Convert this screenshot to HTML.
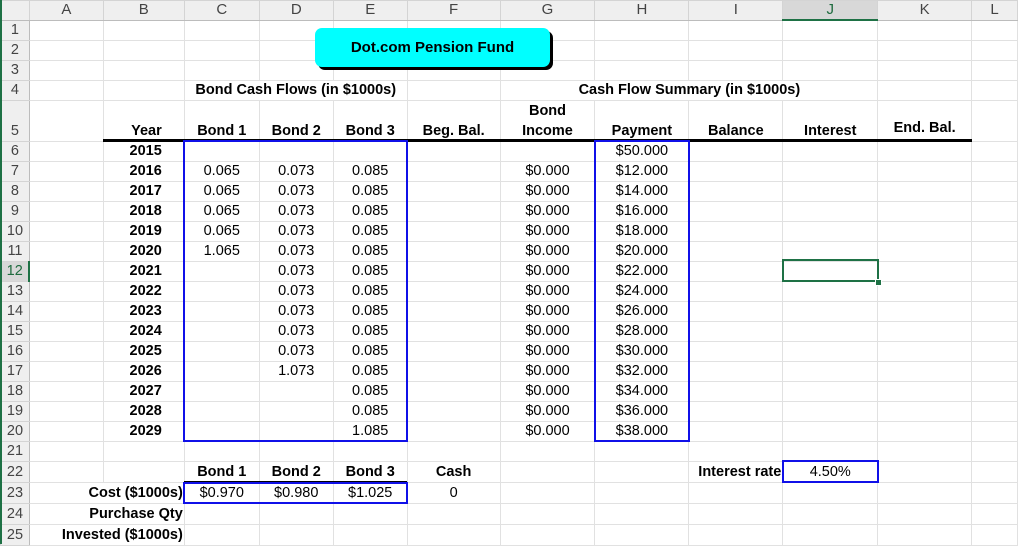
<!DOCTYPE html><html><head><style>
body{margin:0;width:1018px;height:544px;overflow:hidden;background:#fff;font-family:"Liberation Sans",Arial,sans-serif;font-size:14.5px;position:relative}
table{border-collapse:collapse;table-layout:fixed;position:absolute;left:0;top:0}
td{border:1px solid #e1e1e1;padding:0 2px;white-space:nowrap;overflow:visible;height:19px;line-height:19px;text-align:center;color:#000}
tr.h td{background:#efefef;color:#444;font-size:15px;border-color:#d4d4d4;border-bottom:1px solid #bcbcbc;height:18px;line-height:18px}
td.r{background:#efefef;color:#444;text-align:center;padding:0;font-size:14.5px;border-color:#d4d4d4;border-right:1px solid #bcbcbc}
.b{font-weight:bold}.rt{text-align:right}
.bx{position:absolute;border:2px solid #1010e8;box-sizing:border-box}
</style></head><body>
<table>
<colgroup><col style="width:29px"><col style="width:74px"><col style="width:81px"><col style="width:75px"><col style="width:74px"><col style="width:74px"><col style="width:93px"><col style="width:95px"><col style="width:94px"><col style="width:94px"><col style="width:95px"><col style="width:94px"><col style="width:46px"></colgroup>
<tr class="h"><td></td><td>A</td><td>B</td><td>C</td><td>D</td><td>E</td><td>F</td><td>G</td><td>H</td><td>I</td><td style="background:#d8d8d8;color:#1e6b3e;border-bottom:2px solid #1e7145">J</td><td>K</td><td>L</td></tr>
<tr><td class="r">1</td><td></td><td></td><td></td><td></td><td></td><td></td><td></td><td></td><td></td><td></td><td></td><td></td></tr>
<tr><td class="r">2</td><td></td><td></td><td></td><td></td><td></td><td></td><td></td><td></td><td></td><td></td><td></td><td></td></tr>
<tr><td class="r">3</td><td></td><td></td><td></td><td></td><td></td><td></td><td></td><td></td><td></td><td></td><td></td><td></td></tr>
<tr><td class="r">4</td><td></td><td></td><td colspan="3" class="b">Bond Cash Flows (in $1000s)</td><td></td><td colspan="4" class="b" style="text-align:left;padding-left:78px">Cash Flow Summary (in $1000s)</td><td></td><td></td></tr>
<tr><td class="r" style="height:39px;vertical-align:bottom">5</td><td></td><td class="b rt" style="vertical-align:bottom;padding-right:22px">Year</td><td class="b" style="vertical-align:bottom">Bond 1</td><td class="b" style="vertical-align:bottom">Bond 2</td><td class="b" style="vertical-align:bottom">Bond 3</td><td class="b" style="vertical-align:bottom">Beg. Bal.</td><td class="b" style="line-height:20px">Bond<br>Income</td><td class="b" style="vertical-align:bottom">Payment</td><td class="b" style="vertical-align:bottom">Balance</td><td class="b" style="vertical-align:bottom">Interest</td><td class="b" style="vertical-align:bottom;padding-bottom:3px;line-height:19px">End. Bal.</td><td></td></tr>
<tr><td class="r">6</td><td></td><td class="b rt" style="padding-right:22px">2015</td><td></td><td></td><td></td><td></td><td></td><td>$50.000</td><td></td><td></td><td></td><td></td></tr>
<tr><td class="r">7</td><td></td><td class="b rt" style="padding-right:22px">2016</td><td>0.065</td><td>0.073</td><td>0.085</td><td></td><td>$0.000</td><td>$12.000</td><td></td><td></td><td></td><td></td></tr>
<tr><td class="r">8</td><td></td><td class="b rt" style="padding-right:22px">2017</td><td>0.065</td><td>0.073</td><td>0.085</td><td></td><td>$0.000</td><td>$14.000</td><td></td><td></td><td></td><td></td></tr>
<tr><td class="r">9</td><td></td><td class="b rt" style="padding-right:22px">2018</td><td>0.065</td><td>0.073</td><td>0.085</td><td></td><td>$0.000</td><td>$16.000</td><td></td><td></td><td></td><td></td></tr>
<tr><td class="r">10</td><td></td><td class="b rt" style="padding-right:22px">2019</td><td>0.065</td><td>0.073</td><td>0.085</td><td></td><td>$0.000</td><td>$18.000</td><td></td><td></td><td></td><td></td></tr>
<tr><td class="r">11</td><td></td><td class="b rt" style="padding-right:22px">2020</td><td>1.065</td><td>0.073</td><td>0.085</td><td></td><td>$0.000</td><td>$20.000</td><td></td><td></td><td></td><td></td></tr>
<tr><td class="r" style="background:#d8d8d8;color:#1e6b3e;border-right:2px solid #1e7145">12</td><td></td><td class="b rt" style="padding-right:22px">2021</td><td></td><td>0.073</td><td>0.085</td><td></td><td>$0.000</td><td>$22.000</td><td></td><td></td><td></td><td></td></tr>
<tr><td class="r">13</td><td></td><td class="b rt" style="padding-right:22px">2022</td><td></td><td>0.073</td><td>0.085</td><td></td><td>$0.000</td><td>$24.000</td><td></td><td></td><td></td><td></td></tr>
<tr><td class="r">14</td><td></td><td class="b rt" style="padding-right:22px">2023</td><td></td><td>0.073</td><td>0.085</td><td></td><td>$0.000</td><td>$26.000</td><td></td><td></td><td></td><td></td></tr>
<tr><td class="r">15</td><td></td><td class="b rt" style="padding-right:22px">2024</td><td></td><td>0.073</td><td>0.085</td><td></td><td>$0.000</td><td>$28.000</td><td></td><td></td><td></td><td></td></tr>
<tr><td class="r">16</td><td></td><td class="b rt" style="padding-right:22px">2025</td><td></td><td>0.073</td><td>0.085</td><td></td><td>$0.000</td><td>$30.000</td><td></td><td></td><td></td><td></td></tr>
<tr><td class="r">17</td><td></td><td class="b rt" style="padding-right:22px">2026</td><td></td><td>1.073</td><td>0.085</td><td></td><td>$0.000</td><td>$32.000</td><td></td><td></td><td></td><td></td></tr>
<tr><td class="r">18</td><td></td><td class="b rt" style="padding-right:22px">2027</td><td></td><td></td><td>0.085</td><td></td><td>$0.000</td><td>$34.000</td><td></td><td></td><td></td><td></td></tr>
<tr><td class="r">19</td><td></td><td class="b rt" style="padding-right:22px">2028</td><td></td><td></td><td>0.085</td><td></td><td>$0.000</td><td>$36.000</td><td></td><td></td><td></td><td></td></tr>
<tr><td class="r">20</td><td></td><td class="b rt" style="padding-right:22px">2029</td><td></td><td></td><td>1.085</td><td></td><td>$0.000</td><td>$38.000</td><td></td><td></td><td></td><td></td></tr>
<tr><td class="r">21</td><td></td><td></td><td></td><td></td><td></td><td></td><td></td><td></td><td></td><td></td><td></td><td></td></tr>
<tr><td class="r" style="height:20px">22</td><td></td><td></td><td class="b">Bond 1</td><td class="b">Bond 2</td><td class="b">Bond 3</td><td class="b">Cash</td><td></td><td></td><td class="b rt" style="padding-right:1px">Interest rate</td><td>4.50%</td><td></td><td></td></tr>
<tr><td class="r" style="height:20px">23</td><td colspan="2" class="b rt" style="padding-right:1px">Cost ($1000s)</td><td>$0.970</td><td>$0.980</td><td>$1.025</td><td>0</td><td></td><td></td><td></td><td></td><td></td><td></td></tr>
<tr><td class="r" style="height:20px">24</td><td colspan="2" class="b rt" style="padding-right:1px">Purchase Qty</td><td></td><td></td><td></td><td></td><td></td><td></td><td></td><td></td><td></td><td></td></tr>
<tr><td class="r" style="height:20px">25</td><td colspan="2" class="b rt" style="padding-right:1px">Invested ($1000s)</td><td></td><td></td><td></td><td></td><td></td><td></td><td></td><td></td><td></td><td></td></tr>
</table>
<div style="position:absolute;left:0;top:0;width:2px;height:544px;background:#1e7145"></div>
<div style="position:absolute;left:103px;top:139px;width:869px;height:3px;background:#000"></div>
<div style="position:absolute;left:184px;top:481px;width:223px;height:2px;background:#000"></div>
<div class="bx" style="left:183px;top:140px;width:225px;height:302px"></div>
<div class="bx" style="left:594px;top:140px;width:96px;height:302px"></div>
<div class="bx" style="left:183px;top:482px;width:225px;height:22px"></div>
<div class="bx" style="left:782px;top:460px;width:97px;height:23px"></div>
<div style="position:absolute;left:782px;top:259px;width:97px;height:23px;border:2px solid #1e7145;box-sizing:border-box"></div>
<div style="position:absolute;left:875px;top:279px;width:5px;height:5px;background:#1e7145;border:1px solid #fff"></div>
<div style="position:absolute;left:318px;top:31px;width:235px;height:39px;background:#000;border-radius:7px"></div>
<div style="position:absolute;left:315px;top:28px;width:235px;height:39px;background:#00ffff;border-radius:7px;font-weight:bold;font-size:15px;line-height:39px;text-align:center">Dot.com Pension Fund</div>
</body></html>
